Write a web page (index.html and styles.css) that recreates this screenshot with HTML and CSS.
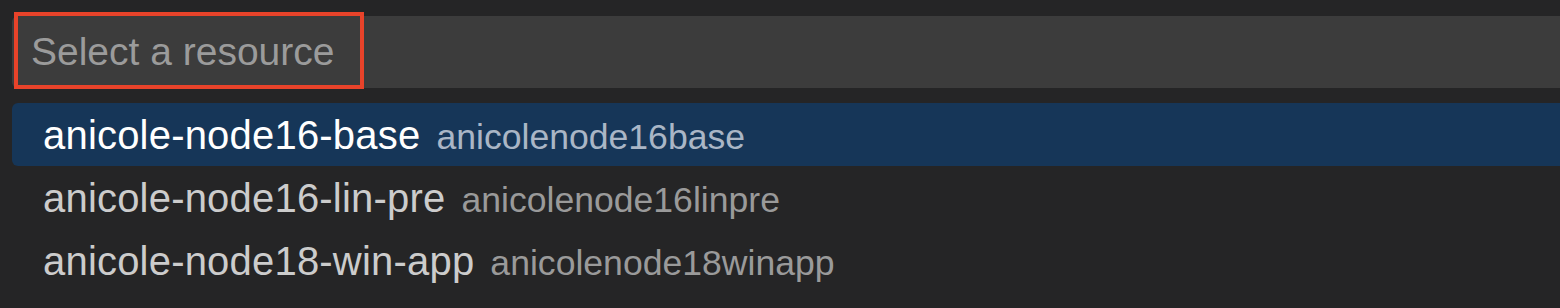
FILE: index.html
```html
<!DOCTYPE html>
<html>
<head>
<meta charset="utf-8">
<link rel="stylesheet" href="styles.css">
</head>
<body>
<div class="quick">
  <div class="input"><span class="placeholder">Select a resource</span></div>
  <div class="list">
    <div class="row selected"><span class="label">anicole-node16-base</span><span class="desc">anicolenode16base</span></div>
    <div class="row"><span class="label">anicole-node16-lin-pre</span><span class="desc">anicolenode16linpre</span></div>
    <div class="row"><span class="label">anicole-node18-win-app</span><span class="desc">anicolenode18winapp</span></div>
  </div>
  <div class="highlight"></div>
</div>
</body>
</html>
```
FILE: styles.css
```css
html, body {
  margin: 0;
  padding: 0;
  background: #252526;
  overflow: hidden;
}
.quick {
  position: relative;
  padding: 16px 0 0 12px;
  font-family: "Liberation Sans", Arial, sans-serif;
  height: 292px;
}
.input {
  height: 72px;
  background: #3c3c3c;
  border-radius: 6px 0 0 6px;
  padding-left: 19px;
  line-height: 72px;
  font-size: 39px;
}
.placeholder {
  color: #9b9b9b;
}
.list {
  margin-top: 15px;
}
.row {
  height: 63px;
  line-height: 64px;
  padding-left: 31px;
  white-space: nowrap;
  border-radius: 6px 0 0 6px;
}
.label {
  font-size: 40px;
  letter-spacing: 0.2px;
  color: #cccccc;
}
.desc {
  font-size: 35.6px;
  color: #9a9a9a;
  margin-left: 16px;
}
.selected {
  background: #163658;
}
.selected .label {
  color: #ffffff;
}
.selected .desc {
  color: #aab6c6;
}
.highlight {
  position: absolute;
  left: 14px;
  top: 12px;
  width: 342px;
  height: 69px;
  border: 4px solid #e8432a;
}
```
